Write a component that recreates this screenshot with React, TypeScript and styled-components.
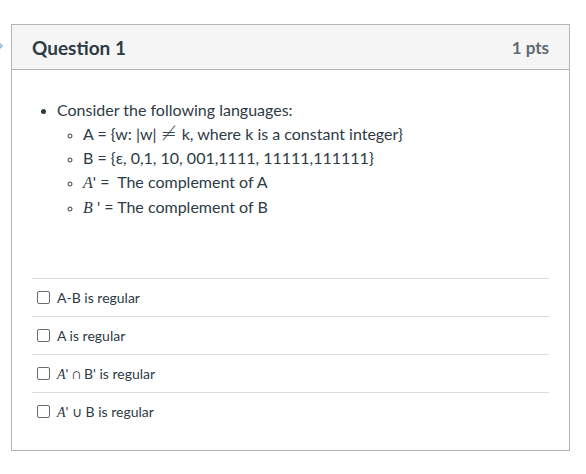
import styled, { createGlobalStyle } from "styled-components";

const Global = createGlobalStyle`
  body {
    margin: 0;
    background: #fff;
    font-family: Lato, "Open Sans", sans-serif;
    color: #2d3b45;
  }
`;

const Page = styled.div`
  position: relative;
  padding: 24px 0 0 11px;
  .nav-arrow {
    position: absolute;
    left: -3px;
    top: 41px;
  }
`;

const Card = styled.div`
  width: 557px;
  border: 1px solid #b4b4b4;
  background: #fff;
`;

const Header = styled.div`
  display: flex;
  justify-content: space-between;
  align-items: center;
  height: 44px;
  padding: 0 20px;
  background: #f5f5f5;
  border-bottom: 1px solid #b4b4b4;
  h2 {
    margin: 0;
    font-size: 19px;
    font-weight: 700;
    color: #2d3b45;
  }
  .pts {
    font-size: 17px;
    font-weight: 700;
    color: #5d6a74;
  }
`;

const Body = styled.div`
  padding: 28px 20px 20px;
`;

const Outer = styled.ul`
  margin: 0 0 58px;
  padding-left: 25px;
  font-size: 16px;
  line-height: 24px;
  color: #2d3b45;
  > li::marker {
    font-size: 14px;
  }
`;

const Inner = styled.ul`
  list-style-type: circle;
  margin: 0;
  padding-left: 26px;
  li::marker {
    font-size: 12px;
  }
`;

const Math = styled.span`
  font-family: "Liberation Serif", serif;
  font-style: italic;
  font-size: 16px;
`;

const Rel = styled.span`
  display: inline-block;
  font-family: "DejaVu Sans", sans-serif;
  font-weight: 300;
  font-size: 19px;
  line-height: 0;
  margin: 0 1px 0 0;
  color: #3a4650;
`;

const Answers = styled.div`
  border-top: 1px solid #dcdcdc;
`;

const Row = styled.label`
  display: flex;
  align-items: center;
  gap: 7px;
  height: 37px;
  padding-left: 5px;
  border-bottom: 1px solid #dcdcdc;
  font-size: 14px;
  color: #2d3b45;
  &:last-child {
    border-bottom: none;
  }
`;

const Box = styled.span`
  width: 11px;
  height: 11px;
  border: 1px solid #6b6b6b;
  border-radius: 2px;
  flex: none;
`;

const Ital = styled.span`
  font-family: "Liberation Serif", serif;
  font-style: italic;
  font-size: 14px;
`;

export default function App() {
  return (
    <Page>
      <Global />
      <svg className="nav-arrow" width="8" height="10" viewBox="0 0 8 10">
        <path d="M1 1 L5 5 L1 9" fill="none" stroke="#7fb3d5" strokeWidth="1.4" />
      </svg>
      <Card>
        <Header>
          <h2>Question 1</h2>
          <span className="pts">1 pts</span>
        </Header>
        <Body>
          <Outer>
            <li>
              Consider the following languages:
              <Inner>
                <li>
                  A = {"{"}w: |w| <Rel>≠</Rel> k, where k is a constant integer{"}"}
                </li>
                <li>B = {"{"}ε, 0,1, 10, 001,1111, 11111,111111{"}"}</li>
                <li>
                  <Math>A</Math>' =&nbsp; The complement of A
                </li>
                <li>
                  <Math>B</Math> ' = The complement of B
                </li>
              </Inner>
            </li>
          </Outer>
          <Answers>
            <Row>
              <Box />
              A-B is regular
            </Row>
            <Row>
              <Box />
              A is regular
            </Row>
            <Row>
              <Box />
              <span>
                <Ital>A</Ital>' ∩ B' is regular
              </span>
            </Row>
            <Row>
              <Box />
              <span>
                <Ital>A</Ital>' ∪ B is regular
              </span>
            </Row>
          </Answers>
        </Body>
      </Card>
    </Page>
  );
}
